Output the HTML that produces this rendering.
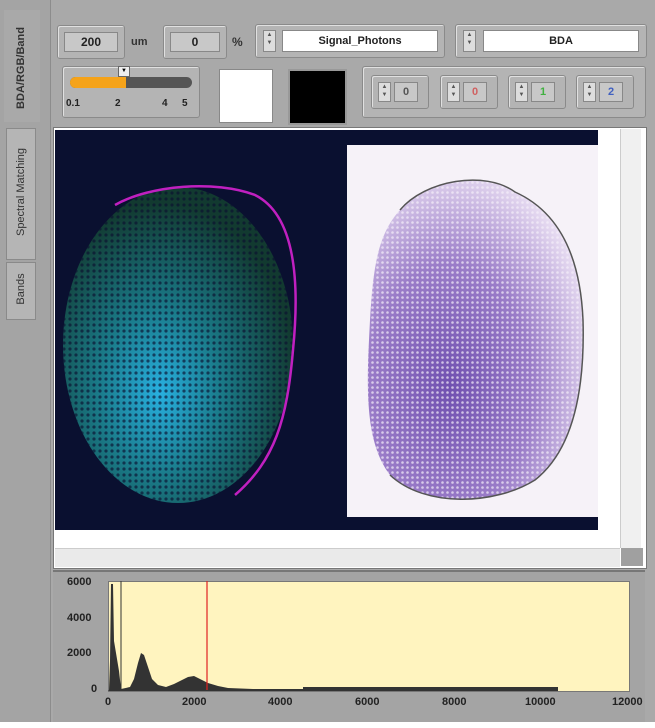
<!DOCTYPE html>
<html><head><style>
body{margin:0;width:655px;height:728px;background:#fff;font-family:"Liberation Sans",sans-serif;overflow:hidden;position:relative}
.a{position:absolute}
.box{position:absolute;background:#b4b4b4;border:1px solid #8a8a8a;border-radius:3px;box-shadow:inset 1px 1px 0 #e0e0e0}
.in{position:absolute;background:#c8c8c8;border:1px solid #888;font-weight:bold;font-size:12px;text-align:center;color:#222}
.spin{position:absolute;width:11px;background:#ddd;border:1px solid #888;font-size:6px;line-height:8px;text-align:center;color:#555}
.w{background:#fff}
</style></head><body>
<div class="a" style="left:0;top:0;width:655px;height:722px;background:#a9a9a9"></div>
<div class="a" style="left:0;top:0;width:50px;height:722px;background:#a4a4a4;border-right:1px solid #8c8c8c"></div>
<div class="a" style="left:4px;top:10px;width:36px;height:112px;background:#a9a9a9"></div>
<div class="a" style="left:6px;top:128px;width:28px;height:130px;background:#b5b5b5;border:1px solid #8a8a8a"></div>
<div class="a" style="left:6px;top:262px;width:28px;height:56px;background:#b5b5b5;border:1px solid #8a8a8a"></div>
<div class="a" style="left:21px;top:68px;transform:translate(-50%,-50%) rotate(-90deg);font-size:11px;font-weight:bold;color:#333;white-space:nowrap">BDA/RGB/Band</div>
<div class="a" style="left:21px;top:192px;transform:translate(-50%,-50%) rotate(-90deg);font-size:11px;color:#333;white-space:nowrap">Spectral Matching</div>
<div class="a" style="left:21px;top:289px;transform:translate(-50%,-50%) rotate(-90deg);font-size:11px;color:#333;white-space:nowrap">Bands</div>
<div class="box" style="left:57px;top:25px;width:66px;height:32px"></div>
<div class="in" style="left:64px;top:32px;width:52px;height:18px;line-height:18px">200</div>
<div class="a" style="left:131px;top:36px;font-size:11px;font-weight:bold;color:#333">um</div>
<div class="box" style="left:163px;top:25px;width:62px;height:32px"></div>
<div class="in" style="left:170px;top:32px;width:48px;height:18px;line-height:18px">0</div>
<div class="a" style="left:232px;top:35px;font-size:12px;font-weight:bold;color:#333">%</div>
<div class="box" style="left:255px;top:24px;width:188px;height:32px"></div>
<div class="spin" style="left:263px;top:30px;height:20px">▲<br>▼</div>
<div class="in w" style="left:282px;top:30px;width:154px;height:20px;line-height:20px;font-size:11px">Signal_Photons</div>
<div class="box" style="left:455px;top:24px;width:190px;height:32px"></div>
<div class="spin" style="left:463px;top:30px;height:20px">▲<br>▼</div>
<div class="in w" style="left:483px;top:30px;width:154px;height:20px;line-height:20px;font-size:11px">BDA</div>
<div class="box" style="left:62px;top:66px;width:136px;height:50px"></div>
<div class="a" style="left:70px;top:77px;width:122px;height:11px;background:#555;border-radius:6px"></div>
<div class="a" style="left:70px;top:77px;width:56px;height:11px;background:#f5a31a;border-radius:6px 0 0 6px"></div>
<div class="a" style="left:118px;top:66px;width:10px;height:9px;background:#eee;border:1px solid #666;font-size:6px;text-align:center;line-height:8px">▼</div>
<div class="a" style="left:66px;top:98px;font-size:10px;font-weight:bold;color:#222;width:125px">
<span class="a" style="left:0">0.1</span><span class="a" style="left:49px">2</span><span class="a" style="left:96px">4</span><span class="a" style="left:116px">5</span></div>
<div class="a" style="left:219px;top:69px;width:52px;height:52px;background:#fff;border:1px solid #888"></div>
<div class="a" style="left:288px;top:69px;width:55px;height:52px;background:#000;border:2px solid #999"></div>
<div class="box" style="left:362px;top:66px;width:282px;height:50px"></div>
<div class="box" style="left:371px;top:75px;width:56px;height:32px"></div><div class="spin" style="left:378px;top:82px;height:18px">▲<br>▼</div><div class="in" style="left:394px;top:82px;width:22px;height:18px;line-height:18px;font-size:11px;color:#555">0</div>
<div class="box" style="left:440px;top:75px;width:56px;height:32px"></div><div class="spin" style="left:447px;top:82px;height:18px">▲<br>▼</div><div class="in" style="left:463px;top:82px;width:22px;height:18px;line-height:18px;font-size:11px;color:#d06060">0</div>
<div class="box" style="left:508px;top:75px;width:56px;height:32px"></div><div class="spin" style="left:515px;top:82px;height:18px">▲<br>▼</div><div class="in" style="left:531px;top:82px;width:22px;height:18px;line-height:18px;font-size:11px;color:#40b040">1</div>
<div class="box" style="left:576px;top:75px;width:56px;height:32px"></div><div class="spin" style="left:583px;top:82px;height:18px">▲<br>▼</div><div class="in" style="left:599px;top:82px;width:22px;height:18px;line-height:18px;font-size:11px;color:#4060c0">2</div>
<div class="a" style="left:53px;top:127px;width:592px;height:440px;background:#fff;border:1px solid #777"></div>
<svg class="a" style="left:55px;top:130px" width="543" height="400">
<defs>
<radialGradient id="g1" cx="0.42" cy="0.65" r="0.6"><stop offset="0" stop-color="#28b0e0"/><stop offset="0.45" stop-color="#1a7a88"/><stop offset="1" stop-color="#123a30"/></radialGradient>
<pattern id="r1" width="6" height="6" patternUnits="userSpaceOnUse"><circle cx="3" cy="3" r="1.6" fill="#0a1030" opacity="0.65"/></pattern>
<radialGradient id="g2" cx="0.38" cy="0.65" r="0.7"><stop offset="0" stop-color="#7050b0"/><stop offset="0.55" stop-color="#9a7cc8"/><stop offset="1" stop-color="#e8ddf2"/></radialGradient>
<pattern id="r2" width="5" height="5" patternUnits="userSpaceOnUse"><circle cx="2.5" cy="2.5" r="1.3" fill="#f5f0fa" opacity="0.7"/></pattern>
</defs>
<rect width="543" height="400" fill="#0a1030"/>
<ellipse cx="123" cy="215" rx="115" ry="158" fill="url(#g1)"/>
<ellipse cx="123" cy="215" rx="115" ry="158" fill="url(#r1)"/>
<path d="M60 75 C95 55 160 50 200 65 C240 85 245 150 238 220 C232 290 220 330 180 365" fill="none" stroke="#c020c0" stroke-width="2.5"/>
<rect x="292" y="15" width="251" height="372" fill="#f6f2f8"/>
<path d="M345 80 C370 50 430 40 460 62 C500 80 525 120 528 190 C530 260 518 320 480 350 C440 375 370 378 335 345 C308 310 312 250 315 190 C318 140 322 105 345 80Z" fill="url(#g2)"/>
<path d="M345 80 C370 50 430 40 460 62 C500 80 525 120 528 190 C530 260 518 320 480 350 C440 375 370 378 335 345 C308 310 312 250 315 190 C318 140 322 105 345 80Z" fill="url(#r2)"/>
<path d="M345 80 C370 50 430 40 460 62 C500 80 525 120 528 190 C530 260 518 320 480 350 C440 375 370 378 335 345" fill="none" stroke="#555" stroke-width="1.5"/>
</svg>
<div class="a" style="left:620px;top:129px;width:20px;height:419px;background:#f0f0f0;border-left:1px solid #ccc"></div>
<div class="a" style="left:55px;top:548px;width:565px;height:18px;background:#eaeaea;border-top:1px solid #ccc"></div>
<div class="a" style="left:621px;top:548px;width:22px;height:18px;background:#a0a0a0"></div>
<div class="a" style="left:53px;top:570px;width:592px;height:150px;background:#a4a4a4;border-top:2px solid #777"></div>
<div class="a" style="left:108px;top:581px;width:520px;height:109px;background:#fff4bf;border:1px solid #777"></div>
<svg class="a" style="left:108px;top:581px" width="520" height="110">
<path d="M1 109 L2 80 L3 3 L5 3 L6 60 L8 72 L11 90 L13 108 L22 106 L26 98 L30 82 L33 72 L36 74 L40 86 L44 98 L50 104 L58 106 L66 103 L74 99 L80 96 L86 95 L92 98 L100 102 L110 105 L120 107 L145 108 L195 108 L195 106 L450 106 L450 110 L0 110Z" fill="#333"/>
<line x1="13" y1="0" x2="13" y2="109" stroke="#333"/>
<line x1="99" y1="0" x2="99" y2="109" stroke="#e02020" stroke-width="1.2"/>
</svg>
<div class="a" style="font-size:11px;font-weight:bold;color:#222;left:0;top:0;width:655px">
<span class="a" style="left:67px;top:576px">6000</span><span class="a" style="left:67px;top:612px">4000</span><span class="a" style="left:67px;top:647px">2000</span><span class="a" style="left:91px;top:683px">0</span>
<span class="a" style="left:105px;top:696px">0</span><span class="a" style="left:182px;top:696px">2000</span><span class="a" style="left:268px;top:696px">4000</span><span class="a" style="left:355px;top:696px">6000</span><span class="a" style="left:442px;top:696px">8000</span><span class="a" style="left:525px;top:696px">10000</span><span class="a" style="left:612px;top:696px">12000</span></div>
</body></html>
